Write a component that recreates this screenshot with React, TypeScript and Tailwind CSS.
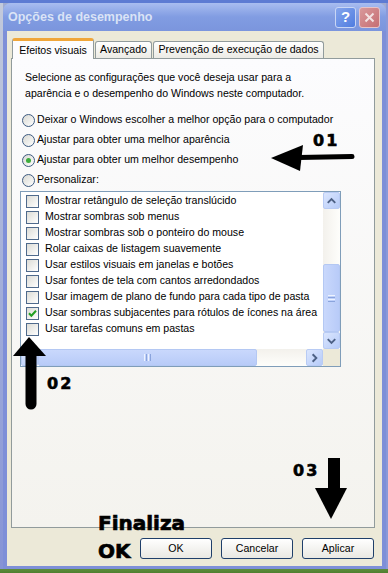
import React from "react";

function Radio({ checked }: { checked?: boolean }) {
  return (
    <span className="flex w-[13px] h-[13px] shrink-0 items-center justify-center rounded-full border border-[#3d5a80] bg-gradient-to-br from-[#d8d8d2] to-white">
      {checked && <span className="block w-[5px] h-[5px] rounded-full bg-[#3cac3c]" />}
    </span>
  );
}

function Check({ checked }: { checked?: boolean }) {
  return (
    <span className="flex w-[13px] h-[13px] shrink-0 items-center justify-center border border-[#4f6a8c] bg-gradient-to-br from-[#dcdcd6] to-white">
      {checked && (
        <svg width="9" height="9" viewBox="0 0 9 9">
          <path d="M1 4.2 L3.4 6.8 L8 1.8" stroke="#22a022" strokeWidth="2" fill="none" />
        </svg>
      )}
    </span>
  );
}

function ScrollBtn({ dir }: { dir: "up" | "down" | "left" | "right" }) {
  const d =
    dir === "up"
      ? "M4 10 L8 6 L12 10"
      : dir === "down"
      ? "M4 6 L8 10 L12 6"
      : dir === "left"
      ? "M10 4 L6 8 L10 12"
      : "M6 4 L10 8 L6 12";
  return (
    <div className="flex w-[17px] h-[17px] shrink-0 items-center justify-center rounded-[2px] border border-[#b8cbf4] bg-gradient-to-br from-[#dbe6fe] to-[#b6cbf8]">
      <svg width="16" height="16" viewBox="0 0 16 16">
        <path d={d} stroke="#4d6185" strokeWidth="2" fill="none" />
      </svg>
    </div>
  );
}

const items: [string, boolean][] = [
  ["Mostrar retângulo de seleção translúcido", false],
  ["Mostrar sombras sob menus", false],
  ["Mostrar sombras sob o ponteiro do mouse", false],
  ["Rolar caixas de listagem suavemente", false],
  ["Usar estilos visuais em janelas e botões", false],
  ["Usar fontes de tela com cantos arredondados", false],
  ["Usar imagem de plano de fundo para cada tipo de pasta", false],
  ["Usar sombras subjacentes para rótulos de ícones na área", true],
  ["Usar tarefas comuns em pastas", false],
];

const radios: [string, boolean][] = [
  ["Deixar o Windows escolher a melhor opção para o computador", false],
  ["Ajustar para obter uma melhor aparência", false],
  ["Ajustar para obter um melhor desempenho", true],
  ["Personalizar:", false],
];

export default function App() {
  return (
    <div className="relative flex flex-col w-[388px] h-[573px] overflow-hidden bg-[#9fabd0] font-['Liberation_Sans',Arial,sans-serif] text-[10.6px] text-black">
      <div className="h-[3px] shrink-0 bg-[#5d7bd3]" />
      <div className="flex shrink-0">
        <div className="w-[3px] shrink-0 bg-gradient-to-b from-[#c3cadb] to-[#8593d6]" />
        {/* Window */}
        <div className="flex flex-col w-[383px] h-[566px] rounded-t-[8px] overflow-hidden">
          <div className="flex h-[28px] shrink-0 items-center pl-[5px] pr-[6px] bg-gradient-to-b from-[#a9bdf0] via-[#819ce2] to-[#7b95dd]">
            <span className="text-[12.5px] font-bold text-[#dae3f6]">Opções de desempenho</span>
            <div className="ml-auto flex gap-[3px]">
              <div className="flex w-[21px] h-[21px] items-center justify-center rounded-[3px] border border-[#c9d6f5] bg-gradient-to-br from-[#86a5ec] to-[#4f7ce0] text-[15px] font-bold text-white">
                ?
              </div>
              <div className="flex w-[21px] h-[21px] items-center justify-center rounded-[3px] border border-[#e7c3c6] bg-gradient-to-br from-[#d9999b] to-[#c56e73]">
                <svg width="11" height="11" viewBox="0 0 11 11">
                  <path d="M1.5 1.5 L9.5 9.5 M9.5 1.5 L1.5 9.5" stroke="#f3e2e2" strokeWidth="2" />
                </svg>
              </div>
            </div>
          </div>
          {/* Body */}
          <div className="flex flex-1 flex-col bg-[#ece9d8] border-x-[4px] border-b-[3px] border-[#7e8fd8] pt-[7px]">
            <div className="ml-[4px] w-[364px] flex flex-col">
              {/* Tabs */}
              <div className="flex items-end pl-[1px] h-[20px]">
                <div className="relative z-10 -mb-px flex h-[21px] w-[82px] items-start justify-center border-x border-t-[3px] border-x-[#919b9c] border-t-[#f0a63a] rounded-t-[3px] bg-[#fcfcfe] pt-[2px]">
                  Efeitos visuais
                </div>
                <div className="ml-[1px] flex h-[17px] w-[57px] items-center justify-center border-x border-t border-[#919b9c] rounded-t-[3px] bg-gradient-to-b from-white to-[#ecebe5]">
                  Avançado
                </div>
                <div className="ml-[1px] flex h-[17px] w-[171px] items-center justify-center border-x border-t border-[#919b9c] rounded-t-[3px] bg-gradient-to-b from-white to-[#ecebe5]">
                  Prevenção de execução de dados
                </div>
              </div>
              {/* Panel */}
              <div className="h-[470px] border border-[#919b9c] bg-gradient-to-b from-[#fcfcfe] to-[#f4f3ee] pt-[10px] pl-[8px]">
                <p className="ml-[5px] leading-[16px]">
                  Selecione as configurações que você deseja usar para a
                  <br />
                  aparência e o desempenho do Windows neste computador.
                </p>
                <div className="mt-[9px] flex flex-col">
                  {radios.map(([t, c]) => (
                    <div key={t} className="flex h-[20px] items-center gap-[2px] pl-[2px]">
                      <Radio checked={c} />
                      <span>{t}</span>
                    </div>
                  ))}
                </div>
                {/* Listbox */}
                <div className="mt-[1px] flex w-[321px] h-[176px] flex-col border border-[#7f9db9] bg-white">
                  <div className="flex h-[157px]">
                    <div className="w-[302px] overflow-hidden pt-[1px] pl-[5px]">
                      {items.map(([t, c]) => (
                        <div key={t} className="flex h-[16px] items-center gap-[6px] whitespace-nowrap">
                          <Check checked={c} />
                          <span>{t}</span>
                        </div>
                      ))}
                    </div>
                    <div className="flex w-[17px] flex-col bg-gradient-to-r from-[#f3f1ec] to-[#fefefb]">
                      <ScrollBtn dir="up" />
                      <div className="h-[55px]" />
                      <div className="flex h-[68px] flex-col items-center justify-center gap-[1px] rounded-[2px] border border-[#b4c8f3] bg-gradient-to-r from-[#c9d8fc] to-[#b8cbf8]">
                        <span className="block h-px w-[7px] bg-[#eef3fe]" />
                        <span className="block h-px w-[7px] bg-[#8aa4dd]" />
                        <span className="block h-px w-[7px] bg-[#eef3fe]" />
                        <span className="block h-px w-[7px] bg-[#8aa4dd]" />
                      </div>
                      <div className="flex-1" />
                      <ScrollBtn dir="down" />
                    </div>
                  </div>
                  <div className="flex h-[17px]">
                    <div className="flex w-[302px] bg-gradient-to-b from-[#f3f1ec] to-[#fefefb]">
                      <ScrollBtn dir="left" />
                      <div className="flex w-[219px] items-center justify-center gap-[1px] rounded-[2px] border border-[#b4c8f3] bg-gradient-to-b from-[#c9d8fc] to-[#b8cbf8]">
                        <span className="block w-px h-[7px] bg-[#eef3fe]" />
                        <span className="block w-px h-[7px] bg-[#8aa4dd]" />
                        <span className="block w-px h-[7px] bg-[#eef3fe]" />
                        <span className="block w-px h-[7px] bg-[#8aa4dd]" />
                      </div>
                      <div className="flex-1" />
                      <ScrollBtn dir="right" />
                    </div>
                    <div className="w-[17px] bg-[#ece9d8]" />
                  </div>
                </div>
              </div>
            </div>
            {/* Buttons */}
            <div className="mt-[10px] flex justify-end gap-[9px] pr-[8px]">
              {["OK", "Cancelar", "Aplicar"].map((b) => (
                <button
                  key={b}
                  className="flex h-[21px] w-[72px] items-center justify-center rounded-[3px] border border-[#1f3f6a] bg-gradient-to-b from-white to-[#e9e8e2] text-[10.6px] text-black"
                >
                  {b}
                </button>
              ))}
            </div>
          </div>
        </div>
        <div className="flex-1 bg-[#8a99d8]" />
      </div>
      <div className="flex-1 bg-gradient-to-b from-[#5d8d3a] to-[#4f7f30]" />

      {/* Annotations */}
      <svg className="absolute left-0 top-0" width="388" height="573" viewBox="0 0 388 573">
        <path d="M271 158 L303 145 L300 171 Z" fill="#000" />
        <path d="M299 157.5 L352 156.5" stroke="#000" strokeWidth="5" strokeLinecap="round" />
        <path d="M29 337 L13 356 L46 356 Z" fill="#000" />
        <path d="M31 352 L31 404" stroke="#000" strokeWidth="11" strokeLinecap="round" />
        <path d="M334 458 L334 494" stroke="#000" strokeWidth="12" strokeLinecap="butt" />
        <path d="M315 488 L347 488 L331 519 Z" fill="#000" />
      </svg>
      <span className="absolute left-[313px] top-[133px] text-[16px] leading-[16px] font-bold tracking-[2px] font-['DejaVu_Sans',sans-serif] [-webkit-text-stroke:0.6px_black]">
        01
      </span>
      <span className="absolute left-[47px] top-[376px] text-[16px] leading-[16px] font-bold tracking-[2px] font-['DejaVu_Sans',sans-serif] [-webkit-text-stroke:0.6px_black]">
        02
      </span>
      <span className="absolute left-[293px] top-[463px] text-[16px] leading-[16px] font-bold tracking-[2px] font-['DejaVu_Sans',sans-serif] [-webkit-text-stroke:0.6px_black]">
        03
      </span>
      <span className="absolute left-[98px] top-[513px] text-[20px] leading-[20px] font-bold font-['DejaVu_Sans',sans-serif] [-webkit-text-stroke:0.7px_black]">
        Finaliza
      </span>
      <span className="absolute left-[98px] top-[541px] text-[20px] leading-[20px] font-bold font-['DejaVu_Sans',sans-serif] [-webkit-text-stroke:0.7px_black]">
        OK
      </span>
    </div>
  );
}
